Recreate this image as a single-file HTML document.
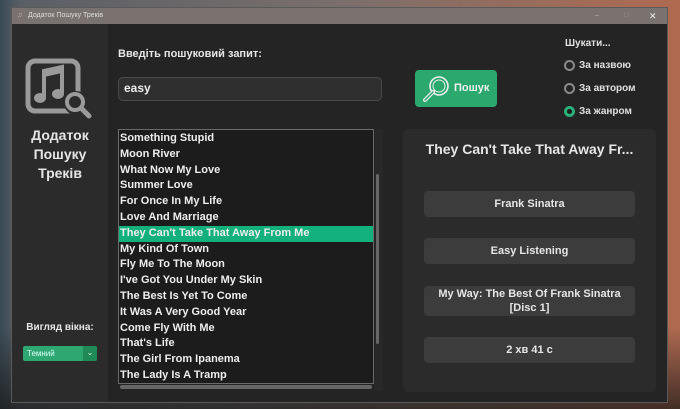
<!DOCTYPE html>
<html><head><meta charset="utf-8"><style>
*{margin:0;padding:0;box-sizing:border-box}
body{width:680px;height:409px;overflow:hidden;position:relative;font-family:"Liberation Sans","DejaVu Sans",sans-serif;font-weight:bold;
background:linear-gradient(180deg,rgba(0,0,0,0) 80%,rgba(20,20,20,.7) 100%),linear-gradient(90deg,#3a4a55 0%,#5a5f66 3%,#7a6f6c 50%,#b06a50 100%);}
.abs{position:absolute}
#win{left:11px;top:7px;width:657px;height:396px;background:#242424;border:1px solid #5a5a5a}
#title{left:0;top:0;width:655px;height:16px;background:#7a726f;color:#ddd;font-size:7px;font-weight:normal;line-height:16px;padding-left:16px}
#side{left:0;top:16px;width:96px;height:378px;background:#2b2b2b}
.t{color:#e6e6e6}
#list{left:106px;top:121px;width:256px;height:255px;background:#1c1c1c;border:1px solid #6a6a6a;overflow:hidden;padding-top:1px}
#list div{height:15.8px;line-height:15.8px;font-size:11px;color:#eee;padding-left:1px;white-space:nowrap}
#list .sel{background:#12b07c}
.btn{left:412px;width:211px;height:26px;background:#3c3c3c;border-radius:4px;color:#e6e6e6;font-size:11px;text-align:center;line-height:26px}
.radio{width:11px;height:11px;border:2px solid #8a8a8a;border-radius:50%}
.rl{font-size:10px;color:#e0e0e0}
</style></head><body>
<div id="win" class="abs">
 <div id="title" class="abs">Додаток Пошуку Треків
  <span class="abs" style="left:5px;top:0;color:#bbb">♫</span>
  <span class="abs" style="left:583px;top:0;color:#bbb">–</span>
  <span class="abs" style="left:612px;top:0;color:#999">□</span>
  <span class="abs" style="left:637px;top:0;color:#eee;font-size:9px">✕</span>
 </div>
 <div id="side" class="abs">
  <svg class="abs" style="left:12px;top:33px" width="74" height="66" viewBox="0 0 74 66">
   <rect x="4" y="4" width="50" height="50" rx="7" fill="none" stroke="#9a9a9a" stroke-width="5"/>
   <path d="M20 40 L20 14 L38 10 L38 36" stroke="#9a9a9a" stroke-width="4" fill="none"/>
   <path d="M20 14 L38 10 L38 16 L20 20Z" fill="#9a9a9a"/>
   <ellipse cx="16" cy="41" rx="6" ry="5" fill="#9a9a9a"/>
   <ellipse cx="34" cy="37" rx="6" ry="5" fill="#9a9a9a"/>
   <circle cx="52" cy="46" r="12" fill="#2b2b2b"/>
   <circle cx="51" cy="45" r="8" fill="none" stroke="#9a9a9a" stroke-width="4"/>
   <path d="M57 51 L65 59" stroke="#9a9a9a" stroke-width="5" stroke-linecap="round"/>
  </svg>
  <div class="abs t" style="left:0;top:102px;width:96px;text-align:center;font-size:14px;line-height:19px">Додаток<br>Пошуку<br>Треків</div>
  <div class="abs t" style="left:0;top:298px;width:96px;text-align:center;font-size:10px">Вигляд вікна:</div>
  <div class="abs" style="left:11px;top:322px;width:74px;height:15px;background:#2ea870;border-radius:2px;color:#dff;font-size:8px;font-weight:normal;line-height:15px;padding-left:4px">Темний
   <div class="abs" style="right:0;top:0;width:14px;height:15px;background:#1f8a55;border-radius:0 2px 2px 0;font-size:8px;text-align:center;line-height:14px;color:#eee">⌄</div></div>
 </div>
 <div class="abs t" style="left:106px;top:40px;font-size:11px">Введіть пошуковий запит:</div>
 <div class="abs" style="left:106px;top:69px;width:264px;height:24px;background:#2f2f2f;border:1px solid #4a4a4a;border-radius:5px;color:#eee;font-size:12px;line-height:21px;padding-left:5px">easy</div>
 <div class="abs" style="left:403px;top:62px;width:82px;height:37px;background:#2aa86e;border-radius:4px;color:#f0f0f0;font-size:11px;line-height:37px;padding-left:39px">Пошук
  <svg class="abs" style="left:6px;top:5px" width="30" height="28" viewBox="0 0 30 28"><circle cx="18" cy="11" r="9" fill="none" stroke="#eee" stroke-width="1.6"/><circle cx="18" cy="11" r="6" fill="none" stroke="#eee" stroke-width="1"/><path d="M12 17 L4 25" stroke="#eee" stroke-width="4" stroke-linecap="round"/><path d="M12 17 L4 25" stroke="#2aa86e" stroke-width="1.5" stroke-linecap="round"/></svg></div>
 <div class="abs rl" style="left:553px;top:30px">Шукати...</div>
 <div class="abs radio" style="left:552px;top:52px"></div><div class="abs rl" style="left:567px;top:52px">За назвою</div>
 <div class="abs radio" style="left:552px;top:75px"></div><div class="abs rl" style="left:567px;top:75px">За автором</div>
 <div class="abs radio" style="left:552px;top:98px;border:3px solid #2ab07a;background:#1a1a1a"></div><div class="abs rl" style="left:567px;top:98px">За жанром</div>
 <div class="abs" style="left:363px;top:121px;width:8px;height:262px;background:#282828"></div>
 <div class="abs" style="left:364px;top:166px;width:3px;height:170px;background:#666;border-radius:2px"></div>
 <div class="abs" style="left:108px;top:377px;width:252px;height:4px;background:#666;border-radius:2px"></div>
 <div id="list" class="abs">
  <div>Something Stupid</div><div>Moon River</div><div>What Now My Love</div><div>Summer Love</div><div>For Once In My Life</div><div>Love And Marriage</div><div class="sel">They Can't Take That Away From Me</div><div>My Kind Of Town</div><div>Fly Me To The Moon</div><div>I've Got You Under My Skin</div><div>The Best Is Yet To Come</div><div>It Was A Very Good Year</div><div>Come Fly With Me</div><div>That's Life</div><div>The Girl From Ipanema</div><div>The Lady Is A Tramp</div>
 </div>
 <div class="abs" style="left:391px;top:121px;width:253px;height:263px;background:#2b2b2b;border-radius:6px"></div>
 <div class="abs t" style="left:391px;top:133px;width:253px;text-align:center;font-size:14px">They Can't Take That Away Fr...</div>
 <div class="abs btn" style="top:183px">Frank Sinatra</div>
 <div class="abs btn" style="top:230px">Easy Listening</div>
 <div class="abs btn" style="top:278px;height:30px;line-height:14px;padding-top:1px">My Way: The Best Of Frank Sinatra<br>[Disc 1]</div>
 <div class="abs btn" style="top:329px">2 хв 41 с</div>
</div>
</body></html>
